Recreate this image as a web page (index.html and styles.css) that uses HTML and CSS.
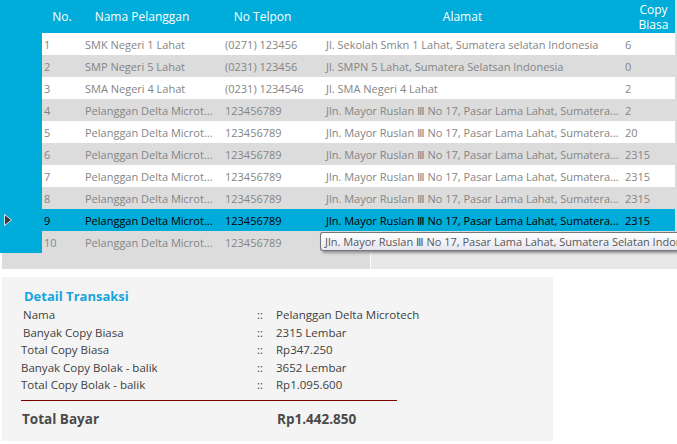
FILE: index.html
```html
<!DOCTYPE html>
<html>
<head>
<meta charset="utf-8">
<link rel="stylesheet" href="styles.css">
</head>
<body>
<div class="grid">
  <div class="row head">
    <div class="rh"></div>
    <div class="hc">No.</div>
    <div class="hc sort">Nama Pelanggan</div>
    <div class="hc sort">No Telpon</div>
    <div class="hc sort">Alamat</div>
    <div class="hc copy">Copy Biasa</div>
    <div class="edge"></div>
  </div>
  <div class="row">
    <div class="rh"></div><div class="c">1</div><div class="c">SMK Negeri 1 Lahat</div><div class="c">(0271) 123456</div><div class="c">Jl. Sekolah Smkn 1 Lahat, Sumatera selatan Indonesia</div><div class="c">6</div><div class="edge"></div>
  </div>
  <div class="row alt">
    <div class="rh"></div><div class="c">2</div><div class="c">SMP Negeri 5 Lahat</div><div class="c">(0231) 123456</div><div class="c">Jl. SMPN 5 Lahat, Sumatera Selatsan Indonesia</div><div class="c">0</div><div class="edge"></div>
  </div>
  <div class="row">
    <div class="rh"></div><div class="c">3</div><div class="c">SMA Negeri 4 Lahat</div><div class="c">(0231) 1234546</div><div class="c">Jl. SMA Negeri 4 Lahat</div><div class="c">2</div><div class="edge"></div>
  </div>
  <div class="row alt">
    <div class="rh"></div><div class="c">4</div><div class="c">Pelanggan Delta Microt...</div><div class="c">123456789</div><div class="c">Jln. Mayor Ruslan Ⅲ No 17, Pasar Lama Lahat, Sumatera...</div><div class="c">2</div><div class="edge"></div>
  </div>
  <div class="row">
    <div class="rh"></div><div class="c">5</div><div class="c">Pelanggan Delta Microt...</div><div class="c">123456789</div><div class="c">Jln. Mayor Ruslan Ⅲ No 17, Pasar Lama Lahat, Sumatera...</div><div class="c">20</div><div class="edge"></div>
  </div>
  <div class="row alt">
    <div class="rh"></div><div class="c">6</div><div class="c">Pelanggan Delta Microt...</div><div class="c">123456789</div><div class="c">Jln. Mayor Ruslan Ⅲ No 17, Pasar Lama Lahat, Sumatera...</div><div class="c">2315</div><div class="edge"></div>
  </div>
  <div class="row">
    <div class="rh"></div><div class="c">7</div><div class="c">Pelanggan Delta Microt...</div><div class="c">123456789</div><div class="c">Jln. Mayor Ruslan Ⅲ No 17, Pasar Lama Lahat, Sumatera...</div><div class="c">2315</div><div class="edge"></div>
  </div>
  <div class="row alt">
    <div class="rh"></div><div class="c">8</div><div class="c">Pelanggan Delta Microt...</div><div class="c">123456789</div><div class="c">Jln. Mayor Ruslan Ⅲ No 17, Pasar Lama Lahat, Sumatera...</div><div class="c">2315</div><div class="edge"></div>
  </div>
  <div class="row sel">
    <div class="rh"><svg class="arrow" width="8" height="12" viewBox="0 0 8 12"><path d="M0.5 0.5 L7.5 6 L0.5 11.5 Z" fill="#3a3a3a" stroke="#ffffff" stroke-width="0.8"/></svg></div><div class="c">9</div><div class="c">Pelanggan Delta Microt...</div><div class="c">123456789</div><div class="c">Jln. Mayor Ruslan Ⅲ No 17, Pasar Lama Lahat, Sumatera...</div><div class="c">2315</div><div class="edge"></div>
  </div>
  <div class="row alt">
    <div class="rh"></div><div class="c">10</div><div class="c">Pelanggan Delta Microt...</div><div class="c">123456789</div><div class="c">Jln. Mayor Ruslan Ⅲ No 17, Pasar Lama Lahat, Sumatera...</div><div class="c">2315</div><div class="edge"></div>
  </div>
  <div class="filler">
    <div class="fill-left"></div>
    <div class="fill-right"></div>
  </div>
  <div class="tooltip">Jln. Mayor Ruslan Ⅲ No 17, Pasar Lama Lahat, Sumatera Selatan Indonesia</div>
</div>

<div class="panel">
  <div class="title">Detail Transaksi</div>
  <div class="drow in"><span class="lbl">Nama</span><span class="sep">::</span><span class="val">Pelanggan Delta Microtech</span></div>
  <div class="drow in"><span class="lbl">Banyak Copy Biasa</span><span class="sep">::</span><span class="val">2315 Lembar</span></div>
  <div class="drow"><span class="lbl">Total Copy Biasa</span><span class="sep">::</span><span class="val">Rp347.250</span></div>
  <div class="drow"><span class="lbl">Banyak Copy Bolak - balik</span><span class="sep">::</span><span class="val">3652 Lembar</span></div>
  <div class="drow"><span class="lbl">Total Copy Bolak - balik</span><span class="sep">::</span><span class="val">Rp1.095.600</span></div>
  <div class="rule"></div>
  <div class="total"><span class="tlbl">Total Bayar</span><span class="tval">Rp1.442.850</span></div>
</div>
</body>
</html>
```

FILE: styles.css
```css
html, body {
  margin: 0;
  padding: 0;
  background: #ffffff;
  overflow: hidden;
}
body {
  width: 677px;
  height: 444px;
  font-family: "Open Sans", "DejaVu Sans", sans-serif;
  font-size: 11px;
}
.grid {
  position: relative;
  width: 677px;
  height: 269px;
  overflow: hidden;
}
.row {
  display: grid;
  grid-template-columns: 42px 40px 140px 101px 299px 53px 2px;
  height: 22px;
  background: #ffffff;
  color: #858585;
}
.row.alt { background: #dcdcdc; }
.row.sel { background: #00acd9; color: #000000; }
.row.head {
  height: 33px;
  background: #00acd9;
  color: #ffffff;
}
.rh {
  background: #00acd9;
  display: flex;
  align-items: center;
}
.arrow { margin-left: 4px; }
.edge { background: #dcdcdc; }
.c {
  display: flex;
  align-items: center;
  padding-left: 2px;
  white-space: nowrap;
  overflow: hidden;
}
.c + .c { padding-left: 3px; }
.hc {
  display: flex;
  align-items: center;
  justify-content: center;
  text-align: center;
  font-size: 12px;
  line-height: 15px;
  white-space: nowrap;
}
.hc.sort { padding-right: 20px; }
.hc.copy { white-space: normal; padding-left: 10px; }
.filler {
  display: flex;
  height: 16px;
  margin-left: 2px;
}
.fill-left {
  width: 368px;
  background: #dcdcdc;
  border-right: 1px solid #ffffff;
}
.fill-right {
  flex: 1;
  background: #e8e8e8;
}
.tooltip {
  position: absolute;
  left: 320px;
  top: 232px;
  width: 357px;
  height: 19px;
  box-sizing: border-box;
  padding-left: 4px;
  line-height: 18px;
  white-space: nowrap;
  overflow: hidden;
  color: #575757;
  border: 1px solid #767676;
  border-right: none;
  border-radius: 3px 0 0 3px;
  background: linear-gradient(#ffffff, #e6e7f0);
  box-shadow: 2px 2px 3px rgba(0, 0, 0, 0.35);
}
.panel {
  margin: 8px 0 0 2px;
  width: 551px;
  height: 164px;
  box-sizing: border-box;
  padding: 10px 0 0 19px;
  background: #f4f4f4;
  color: #404040;
  font-size: 11.5px;
}
.title {
  height: 19px;
  line-height: 19px;
  padding-left: 3px;
  font-weight: bold;
  font-size: 13px;
  color: #14a5dc;
}
.drow {
  display: flex;
  height: 17.5px;
  line-height: 17.5px;
  white-space: nowrap;
}
.lbl { width: 236px; }
.drow.in .lbl { padding-left: 2px; width: 234px; }
.sep { width: 19px; }
.rule {
  width: 376px;
  height: 1px;
  margin-top: 6px;
  background: #7a0000;
}
.total {
  display: flex;
  height: 24px;
  line-height: 24px;
  margin-top: 6px;
  font-weight: bold;
  font-size: 13.5px;
  color: #4a4a4a;
}
.tlbl { width: 255px; padding-left: 1px; }
```
